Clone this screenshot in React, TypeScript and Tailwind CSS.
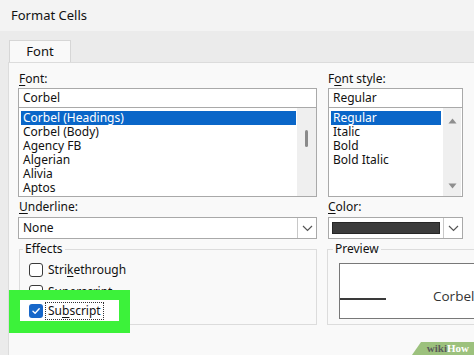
import React from "react";

const Check = () => (
  <svg width="10" height="10" viewBox="0 0 10 10" fill="none">
    <path d="M2 5.2 L4.1 7.2 L8.2 2.8" stroke="white" strokeWidth="1.4" strokeLinecap="round" strokeLinejoin="round" />
  </svg>
);

const Chevron = () => (
  <svg width="11" height="7" viewBox="0 0 11 7" fill="none">
    <path d="M1 1 L5.5 5.5 L10 1" stroke="#555" strokeWidth="1.2" />
  </svg>
);

const Tri = ({ up }: { up?: boolean }) => (
  <svg width="9" height="6" viewBox="0 0 9 6">
    {up ? <path d="M0.5 5.5 L4.5 0.5 L8.5 5.5 Z" fill="#8e8e8e" /> : <path d="M0.5 0.5 L4.5 5.5 L8.5 0.5 Z" fill="#8e8e8e" />}
  </svg>
);

const U = ({ children }: { children: React.ReactNode }) => <span className="underline underline-offset-2">{children}</span>;

export default function App() {
  const fonts = ["Corbel (Headings)", "Corbel (Body)", "Agency FB", "Algerian", "Alivia", "Aptos"];
  const styles = ["Regular", "Italic", "Bold", "Bold Italic"];
  return (
    <div className="relative w-[474px] h-[355px] overflow-hidden bg-[#ebebeb] font-['Noto_Sans',sans-serif] text-[12px] text-[#111] flex flex-col">
      <div className="h-[31px] shrink-0 bg-[#f3f3f3] pl-[11px] flex items-center text-[13px] leading-none">Format Cells</div>
      <div className="h-[31px] shrink-0 flex items-end pl-[9px]">
        <div className="w-[62px] h-[22px] border border-b-0 border-[#d6d6d6] bg-[#f9f9f9] flex items-center justify-center text-[13px]">Font</div>
      </div>
      <div className="flex-1 ml-[8px] bg-[#f9f9f9] border-t border-l border-[#dcdcdc] pl-[9px] pt-[8px]">
        <div className="grid grid-cols-[299px_135px] gap-x-[11px]">
          {/* Left column */}
          <div className="flex flex-col">
            <div className="h-[16px] leading-[16px] pl-px"><U>F</U>ont:</div>
            <div className="mt-px h-[20px] border border-[#a9a9a9] bg-white px-[4px] flex items-center leading-none">Corbel</div>
            <div className="h-[89px] border border-t-0 border-[#a9a9a9] bg-white flex">
              <div className="flex-1 pt-[3px] pl-[2px]">
                {fonts.map((f, i) => (
                  <div key={f} className={`h-[14px] leading-[14px] pl-[2px] w-[275px] ${i === 0 ? "bg-[#0a66c8] text-white" : ""}`}>{f}</div>
                ))}
              </div>
              <div className="w-[19px] bg-[#efefef] flex justify-center pt-[22px]">
                <div className="w-[3px] h-[17px] rounded-full bg-[#8a8a8a]" />
              </div>
            </div>
            <div className="mt-[2px] h-[16px] leading-[16px] pl-px"><U>U</U>nderline:</div>
            <div className="mt-[2px] h-[22px] border border-[#a9a9a9] bg-white flex items-stretch">
              <div className="flex-1 px-[4px] flex items-center leading-none">None</div>
              <div className="w-[19px] border-l border-[#c8c8c8] flex items-center justify-center"><Chevron /></div>
            </div>
            <fieldset className="mt-[2px] ml-px w-[298px] h-[84px] border border-[#dcdcdc] pl-[9px]">
              <legend className="ml-[-6px] px-[2px] leading-[16px] h-[16px]">Effects</legend>
              <div className="mt-[3px] h-[20px] flex items-center gap-[5px]">
                <div className="w-[14px] h-[14px] rounded-[3px] border border-[#3a3a3a] bg-white" />
                <span>Stri<U>k</U>ethrough</span>
              </div>
              <div className="mt-[2px] h-[20px] flex items-center gap-[5px]">
                <div className="w-[14px] h-[14px] rounded-[3px] border border-[#3a3a3a] bg-white" />
                <span>Sup<U>e</U>rscript</span>
              </div>
            </fieldset>
          </div>
          {/* Right column */}
          <div className="flex flex-col">
            <div className="h-[16px] leading-[16px]">F<U>o</U>nt style:</div>
            <div className="mt-px h-[20px] border border-[#a9a9a9] bg-white px-[4px] flex items-center leading-none">Regular</div>
            <div className="h-[89px] border border-t-0 border-[#a9a9a9] bg-white flex">
              <div className="flex-1 pt-[3px] pl-[2px]">
                {styles.map((f, i) => (
                  <div key={f} className={`h-[14px] leading-[14px] pl-[2px] w-[110px] ${i === 0 ? "bg-[#0a66c8] text-white" : ""}`}>{f}</div>
                ))}
              </div>
              <div className="w-[18px] mr-px bg-[#efefef] flex flex-col items-center justify-between pt-[10px] pb-[7px]">
                <Tri up />
                <Tri />
              </div>
            </div>
            <div className="mt-[2px] h-[16px] leading-[16px]"><U>C</U>olor:</div>
            <div className="mt-[2px] h-[22px] border border-[#a9a9a9] bg-white flex items-stretch">
              <div className="flex-1 pl-[3px] pr-[3px] flex items-center">
                <div className="w-full h-[12px] bg-[#3c3c3c] border border-[#262626]" />
              </div>
              <div className="w-[19px] border-l border-[#c8c8c8] flex items-center justify-center"><Chevron /></div>
            </div>
            <fieldset className="mt-[2px] ml-[-1px] w-[170px] h-[84px] border border-[#dcdcdc] pl-[10px]">
              <legend className="ml-[-5px] px-[2px] leading-[16px] h-[16px]">Preview</legend>
              <div className="mt-[6px] ml-px h-[56px] border border-[#787878] bg-white flex items-start">
                <div className="mt-[34px] w-[46px] h-[2px] bg-[#3a3a3a] shrink-0" />
                <div className="ml-[47px] mt-[24px] text-[13.5px] leading-[16px] text-[#333] font-['Open_Sans',sans-serif]">Corbel</div>
              </div>
            </fieldset>
          </div>
        </div>
      </div>

      {/* green highlight overlay */}
      <div className="absolute left-[9px] top-[290px] w-[121px] h-[43px] bg-[#3cf23a] pt-[10px] pl-[11px] pr-[11px] pb-[12px]">
        <div className="w-full h-full bg-white flex items-center pl-[9px]">
          <div className="w-[14px] h-[14px] rounded-[3px] bg-[#1767c9] flex items-center justify-center"><Check /></div>
          <div className="ml-[2px] h-[18px] border border-dotted border-[#333] px-[2px] flex items-center leading-none">Su<U>b</U>script</div>
        </div>
      </div>

      {/* wikiHow watermark */}
      <div className="absolute right-0 bottom-0 w-[62px] h-[13px] bg-[#9cc17d] [clip-path:polygon(9px_0,100%_0,100%_100%,0_100%)] flex items-center justify-end pr-[5px] font-['Liberation_Serif',serif] font-bold text-[11px] leading-none">
        <span className="text-[#5a5a5a]">wiki</span>
        <span className="text-white">How</span>
      </div>
    </div>
  );
}
